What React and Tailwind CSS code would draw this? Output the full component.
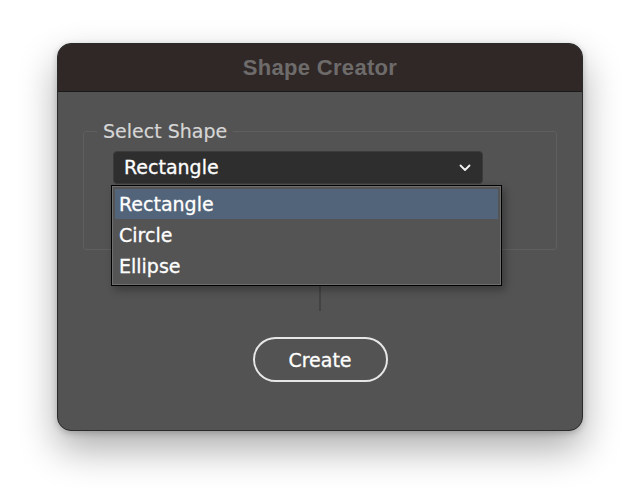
import React from "react";

const shapes = ["Rectangle", "Circle", "Ellipse"];

function Chevron() {
  return (
    <svg width="12" height="8" viewBox="0 0 12 8" fill="none">
      <path d="M1.5 1.5L6 6L10.5 1.5" stroke="#f2f2f2" strokeWidth="1.8" strokeLinecap="round" strokeLinejoin="round" />
    </svg>
  );
}

export default function App() {
  return (
    <div className="w-[640px] h-[501px] bg-white pt-[43px] pl-[57px] font-['DejaVu_Sans',sans-serif]">
      <div className="w-[526px] h-[388px] rounded-[14px] overflow-hidden bg-[#535353] border border-[#2a2a2a] shadow-[0_18px_38px_rgba(0,0,0,0.33),0_2px_6px_rgba(0,0,0,0.2)] flex flex-col">
        {/* title bar */}
        <div className="h-[48px] bg-[#302827] border-b border-[#1c1a1a] flex items-center justify-center shrink-0">
          <span className="text-[22px] font-bold text-[#6e6b6b] font-['Liberation_Sans',Arial,sans-serif] tracking-[0.3px]">
            Shape Creator
          </span>
        </div>

        <div className="flex flex-col px-[25px] pt-[28px]">
          <fieldset className="h-[130px] border border-[#5f5f5f] rounded-[3px] pl-[29px] pr-[72px] pt-[9px]">
            <legend className="ml-[-16px] px-[6px] text-[19px] leading-[22px] text-[#d6d6d6] [-webkit-text-stroke:0.2px_#d6d6d6]">
              Select Shape
            </legend>
            <div className="relative">
              <div className="h-[33px] w-[370px] bg-[#2e2e2e] border border-[#3c3c3c] rounded-[4px] flex items-center justify-between pl-[10px] pr-[11px]">
                <span className="text-[19px] text-white [-webkit-text-stroke:0.3px_white]">Rectangle</span>
                <Chevron />
              </div>
              <div className="absolute left-[-2px] top-[34px] w-[391px] h-[101px] z-10 bg-[#545454] border border-black shadow-[inset_0_0_0_1px_#6e6e6e,3px_4px_8px_rgba(0,0,0,0.3)] p-[3px] flex flex-col">
                {shapes.map((s, i) => (
                  <div
                    key={s}
                    className={
                      i === 0
                        ? "h-[31px] bg-[#52647a] flex items-center pl-[4px] text-[19px] text-white [-webkit-text-stroke:0.3px_white]"
                        : "h-[32px] flex items-center pl-[4px] text-[19px] text-white [-webkit-text-stroke:0.3px_white]"
                    }
                  >
                    {s}
                  </div>
                ))}
              </div>
            </div>
          </fieldset>

          <div className="mt-[12px] mx-auto w-[2px] h-[49px] bg-[#434343]" />

          <button className="mt-[26px] mx-auto w-[135px] h-[45px] rounded-full border-2 border-[#e6e6e6] text-[19px] text-white flex items-center justify-center pt-[2px] [-webkit-text-stroke:0.3px_white]">
            Create
          </button>
        </div>
      </div>
    </div>
  );
}
